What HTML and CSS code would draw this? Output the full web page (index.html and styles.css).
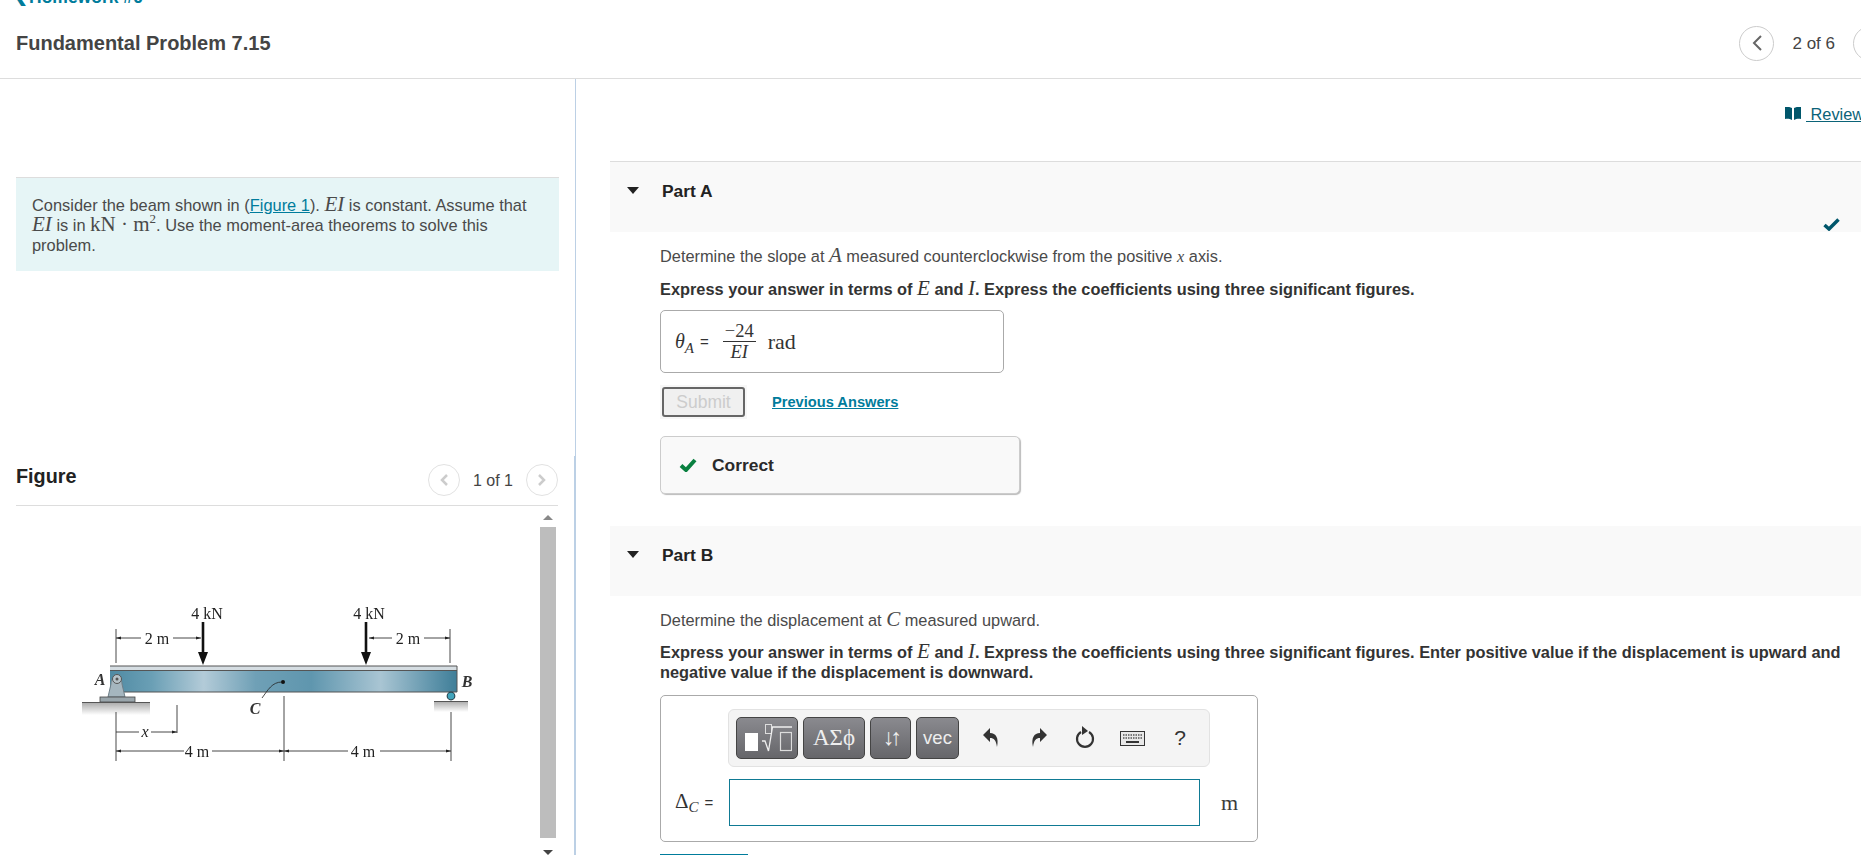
FILE: index.html
```html
<!DOCTYPE html>
<html lang="en">
<head>
<meta charset="utf-8">
<title>Fundamental Problem 7.15</title>
<link rel="stylesheet" href="styles.css">
</head>
<body>
<div class="crumb"><a class="crumb-link" href="#">❮Homework #6</a></div>
<header class="header">
  <h1 class="title">Fundamental Problem 7.15</h1>
  <nav class="pager">
    <span class="circle"><svg width="12" height="18" viewBox="0 0 12 18"><path class="chev" d="M10 2 3 9l7 7"/></svg></span>
    <span class="pager-text">2 of 6</span>
    <span class="circle"></span>
  </nav>
</header>
<main class="main">
  <section class="left">
    <div class="intro">
      <div class="note">Consider the beam shown in (<a class="link" href="#">Figure 1</a>). <span class="mi big">EI</span> is constant. Assume that<br><span class="mi big">EI</span> is in <span class="mr big">kN · m<sup class="sup">2</sup></span>. Use the moment-area theorems to solve this<br>problem.</div>
    </div>
    <div class="figure">
      <div class="fig-head">
        <h2 class="fig-title">Figure</h2>
        <div class="fig-pager">
          <span class="circle small"><svg width="10" height="14" viewBox="0 0 10 14"><path class="chev faint" d="M8 2 3 7l5 5"/></svg></span>
          <span class="fig-count">1 of 1</span>
          <span class="circle small"><svg width="10" height="14" viewBox="0 0 10 14"><path class="chev faint" d="m2 2 5 5-5 5"/></svg></span>
        </div>
      </div>
      <div class="fig-body">
        <svg class="beam" width="420" height="190" viewBox="0 0 420 190">
          <defs>
            <linearGradient id="steel" x1="0" x2="1" y1="0" y2="0">
              <stop offset="0" stop-color="#4f8aa3"/>
              <stop offset=".12" stop-color="#6a9fb5"/>
              <stop offset=".27" stop-color="#b3cbd8"/>
              <stop offset=".42" stop-color="#6fa0b6"/>
              <stop offset=".58" stop-color="#5f96ae"/>
              <stop offset=".78" stop-color="#a9c5d3"/>
              <stop offset=".93" stop-color="#5f94ab"/>
              <stop offset="1" stop-color="#3f7e98"/>
            </linearGradient>
            <linearGradient id="shade" x1="0" x2="0" y1="0" y2="1">
              <stop offset="0" stop-color="#a8a8a8"/>
              <stop offset="1" stop-color="#fff"/>
            </linearGradient>
          </defs>
          <rect x="12" y="112" width="68" height="13" fill="url(#shade)"/>
          <rect x="364" y="111" width="34" height="11" fill="url(#shade)"/>
          <rect x="40" y="76" width="347" height="26" fill="url(#steel)"/>
          <rect x="40" y="76" width="347" height="4" fill="#d5dde2"/>
          <path class="ln2" d="M40 80.500h347M40 102h347M40 76h347M387 76v26"/>
          <path d="M46 87c5 0 6 4 6 7l3 13H38l3-13c0-3 1-7 5-7z" fill="#a5b6bf" stroke="#6f7f88"/>
          <circle cx="47" cy="89" r="4.500" fill="#b7c3c9" stroke="#555"/>
          <circle cx="47" cy="89" r="1.500" fill="#555"/>
          <rect x="30" y="107" width="35" height="5" fill="#9aa6ac" stroke="#444" stroke-width=".8"/>
          <path class="ln2" d="M12 112.500h68M364 111.500h34"/>
          <circle cx="381" cy="106" r="3.800" fill="#41a5bd" stroke="#2b4a55" stroke-width="1.200"/>
          <path class="ln" d="M46 39v34M46 122v49M380 39v34M381 122v49M214 106v65M107 115v28"/>
          <path class="ln" d="M46 48h25M103 48h28M299 48h23M354 48h26M46 142h23M81 142h26M46 161h68M142 161h72M214 161h64M310 161h71"/>
          <path d="M46 48l5-1.500v3zM131 48l-5-1.500v3zM299 48l5-1.500v3zM380 48l-5-1.500v3zM107 142l-5-1.500v3zM46 161l5-1.500v3zM214 161l-5-1.500v3zM214 161l5-1.500v3zM381 161l-5-1.500v3z" fill="#222"/>
          <path class="shaft" d="M133 32v31M296 32v31"/>
          <path d="M128 62h10l-5 13zM291 62h10l-5 13z" fill="#111"/>
          <circle cx="213" cy="92" r="2" fill="#111"/>
          <path class="thin" d="M212 92c-10 0-14 8-20 16"/>
          <text class="d" x="137" y="29" text-anchor="middle">4 kN</text>
          <text class="d" x="299" y="29" text-anchor="middle">4 kN</text>
          <text class="d" x="87" y="54" text-anchor="middle">2 m</text>
          <text class="d" x="338" y="54" text-anchor="middle">2 m</text>
          <text class="d" x="127" y="167" text-anchor="middle">4 m</text>
          <text class="d" x="293" y="167" text-anchor="middle">4 m</text>
          <text class="dl" x="30" y="95" text-anchor="middle">A</text>
          <text class="dl" x="397" y="97" text-anchor="middle">B</text>
          <text class="dl" x="185" y="124" text-anchor="middle">C</text>
          <text class="dx" x="75" y="147" text-anchor="middle">x</text>
        </svg>
        <div class="scrollbar">
          <span class="sb-up"></span>
          <span class="sb-thumb"></span>
          <span class="sb-down"></span>
        </div>
      </div>
    </div>
  </section>
  <section class="right">
    <div class="review-row">
      <a class="review" href="#"><svg class="book" width="16" height="13" viewBox="0 0 16 13"><path d="M0 0c3-.5 5 0 7 1v12c-2-1-4-1.500-7-1zM16 0c-3-.5-5 0-7 1v12c2-1 4-1.500 7-1z"/></svg><span class="review-text">&nbsp;Review</span></a>
    </div>
    <div class="part-head">
      <span class="tri"></span><h3 class="part-name">Part A</h3>
      <svg class="done" width="17" height="13" viewBox="0 0 17 13"><path d="M1.500 7 6 11l9.500-9.500" fill="none" stroke-width="3.500"/></svg>
    </div>
    <div class="part-body">
      <p class="q first">Determine the slope at <span class="mi big">A</span> measured counterclockwise from the positive <span class="mi">x</span> axis.</p>
      <p class="q strong gap">Express your answer in terms of <span class="mi big reg">E</span> and <span class="mi big reg">I</span>. Express the coefficients using three significant figures.</p>
      <div class="answer">
        <span class="math"><span class="mi">θ</span><sub class="mi sub">A</sub></span><span class="eq">=</span>
        <span class="frac"><span class="num">−24</span><span class="den mi">EI</span></span>
        <span class="unit">rad</span>
      </div>
      <div class="actions">
        <span class="halo"><button class="submit" type="button" disabled>Submit</button></span>
        <a class="prev" href="#">Previous Answers</a>
      </div>
      <div class="correct">
        <svg class="ok" width="18" height="14" viewBox="0 0 18 14"><path d="M2 7.500 7 12l9-10" fill="none" stroke-width="4"/></svg>
        <span class="correct-text">Correct</span>
      </div>
    </div>
    <div class="part-head second">
      <span class="tri"></span><h3 class="part-name">Part B</h3>
    </div>
    <div class="part-body">
      <p class="q first">Determine the displacement at <span class="mi big">C</span> measured upward.</p>
      <p class="q strong gap wide">Express your answer in terms of <span class="mi big reg">E</span> and <span class="mi big reg">I</span>. Express the coefficients using three significant figures. Enter positive value if the displacement is upward and negative value if the displacement is downward.</p>
      <div class="entry">
        <div class="toolbar">
          <span class="tb w62"><svg width="50" height="30" viewBox="0 0 50 30"><rect x="3" y="10" width="13" height="18" fill="#fff"/><rect x="23.500" y="1.500" width="6" height="9" fill="none" stroke="#ddd"/><path d="M20 18h3l3.500 10 4-24H50" fill="none" stroke="#eee" stroke-width="1.300"/><rect x="38.500" y="9.500" width="11" height="18" fill="none" stroke="#ddd" stroke-width="1.200"/></svg></span>
          <span class="tb w62 serif">ΑΣϕ</span>
          <span class="tb w41 serif">↓↑</span>
          <span class="tb w43">vec</span>
          <span class="tool t1"><svg width="20" height="24" viewBox="0 0 20 24"><path d="M8 2 1 9l7 7v-4c4 0 6 2 7 9 2-9-1-14-7-14z" fill="#333"/></svg></span>
          <span class="tool t2"><svg width="20" height="24" viewBox="0 0 20 24"><path d="m12 2 7 7-7 7v-4c-4 0-6 2-7 9-2-9 1-14 7-14z" fill="#333"/></svg></span>
          <span class="tool t3"><svg width="22" height="24" viewBox="0 0 22 24"><path d="M15 6a8 8 0 1 1-8 0" fill="none" stroke="#333" stroke-width="2.200"/><path d="M8 0v9l6-4z" fill="#333"/></svg></span>
          <span class="tool t4"><svg width="25" height="15" viewBox="0 0 25 15"><rect x=".5" y=".5" width="24" height="14" fill="#e8e8e8" stroke="#333"/><path d="M3 4h19M3 7h19" stroke="#555" stroke-width="1.500" stroke-dasharray="1.500 1"/><path d="M6 11h13" stroke="#333" stroke-width="2"/></svg></span>
          <span class="tool t5">?</span>
        </div>
        <div class="entry-row">
          <span class="label"><span class="mr big">Δ</span><sub class="mi sub">C</sub><span class="eq">=</span></span>
          <span class="field"></span>
          <span class="unit unit-m">m</span>
        </div>
      </div>
      <button class="send" type="button">Submit</button>
    </div>
  </section>
</main>
</body>
</html>
```

FILE: styles.css
```css
* { box-sizing: border-box; }
html, body { margin: 0; height: 855px; overflow: hidden; background: #fff; }
body { font-family: "Liberation Sans", Arial, sans-serif; font-size: 16.350px; color: #3c3c3c; width: 1861px; }
a { text-decoration: none; }

.crumb { height: 6px; overflow: hidden; padding-left: 14px; }
.crumb-link { display: block; margin-top: -12px; font-weight: bold; font-size: 17.500px; line-height: 18px; color: #007c9c; }

.header { height: 73px; border-bottom: 1px solid #ddd; display: flex; align-items: center; justify-content: space-between; padding: 0 0 0 16px; overflow: hidden; }
.title { margin: 0; font-size: 20px; line-height: 24px; font-weight: bold; color: #444; position: relative; top: 1px; white-space: nowrap; }
.pager { display: flex; align-items: center; margin-right: -27px; position: relative; top: 1px; }
.circle { width: 35px; height: 35px; border: 1px solid #ccc; border-radius: 50%; display: flex; align-items: center; justify-content: center; flex: none; }
.chev { fill: none; stroke: #666; stroke-width: 2; }
.chev.faint { stroke: #ccc; stroke-width: 2.500; }
.pager-text { margin: 2px 18px 0 18px; font-size: 17px; color: #444; }

.main { display: flex; height: 776px; }
.left { width: 576px; flex: none; display: flex; flex-direction: column; border-right: 1px solid #bcd0e5; }
.intro { height: 377px; padding: 98px 16px 0 16px; }
.note { height: 94px; background: #e6f5f6; border-top: 1px solid #ddd; padding: 17px 16px 0; font-size: 16.400px; line-height: 20px; color: #4a4a4a; white-space: nowrap; }
.link { color: #007c9c; text-decoration: underline; }
.mi { font-family: "Liberation Serif", serif; font-style: italic; }
.mr { font-family: "Liberation Serif", serif; }
.big { font-size: 21px; line-height: 14px; }
.reg { font-weight: normal; }
.sup { font-size: 13px; line-height: 0; }

.figure { flex: 1; border-right: 1px solid #bcd0e5; min-height: 0; }
.fig-head { height: 50px; margin: 0 16px 0 16px; border-bottom: 1px solid #ddd; display: flex; justify-content: space-between; align-items: center; }
.fig-title { margin: 0; font-size: 19.800px; font-weight: bold; color: #222; position: relative; top: -4px; }
.fig-pager { display: flex; align-items: center; position: relative; top: -1px; }
.circle.small { width: 32px; height: 32px; border-color: #e2e2e2; }
.fig-count { margin: 2px 13px 0 13px; font-size: 16px; color: #444; }
.fig-body { display: flex; height: 349px; position: relative; }
.beam { flex: none; margin: 84px 0 0 70px; filter: blur(.4px); }
.ln { fill: none; stroke: #333; stroke-width: .9; }
.ln2 { fill: none; stroke: #555; stroke-width: 1; }
.thin { fill: none; stroke: #222; stroke-width: .8; }
.shaft { fill: none; stroke: #111; stroke-width: 2.600; }
.d { font-family: "Liberation Serif", serif; font-size: 16px; fill: #222; }
.dl { font-family: "Liberation Serif", serif; font-size: 16px; font-style: italic; font-weight: bold; fill: #333; }
.dx { font-family: "Liberation Serif", serif; font-size: 16px; font-style: italic; fill: #222; }

.scrollbar { width: 17px; margin-left: 49px; padding-top: 9px; display: flex; flex-direction: column; align-items: center; flex: none; }
.sb-up { width: 0; height: 0; border: 5px solid transparent; border-top: 0; border-bottom: 5px solid #888; }
.sb-thumb { width: 16px; height: 312px; margin-top: 7px; background: #bdbdbd; }
.sb-down { width: 0; height: 0; margin-top: 12px; border: 5px solid transparent; border-bottom: 0; border-top: 5px solid #444; }

.right { flex: 1; min-width: 0; overflow: hidden; }
.review-row { height: 82px; padding: 25px 0 0 1209px; white-space: nowrap; }
.review { display: flex; align-items: flex-start; color: #0b6378; font-size: 16.350px; line-height: 20px; }
.book { fill: #00566b; margin-top: 3px; flex: none; }
.review-text { margin-left: 5px; text-decoration: underline; }

.part-head { height: 71px; margin-left: 34px; background: #f9f9f9; border-top: 1px solid #ddd; padding: 17px 0 0 17px; display: flex; align-items: flex-start; position: relative; }
.part-head.second { margin-top: 32px; height: 70px; border-top: 0; }
.tri { width: 0; height: 0; margin-top: 8px; border: 6.500px solid transparent; border-bottom: 0; border-top: 7px solid #222; flex: none; }
.part-name { margin: 0 0 0 23px; font-size: 17.400px; line-height: 24px; font-weight: bold; color: #222; }
.done { position: absolute; right: 21px; top: 56px; stroke: #00566b; }

.part-body { margin-left: 84px; }
.q { margin: 0; line-height: 20px; font-size: 16.350px; color: #4a4a4a; }
.q.first { padding-top: 14px; }
.q.gap { margin-top: 12px; }
.q.strong { font-weight: bold; color: #333; }
.q.wide { width: 1190px; }
.answer { width: 344px; height: 63px; margin-top: 11px; border: 1px solid #aaa; border-radius: 5px; padding-left: 14px; display: flex; align-items: center; font-family: "Liberation Serif", serif; font-size: 18px; color: #333; }
.math { font-size: 20px; }
.sub { font-size: 15px; line-height: 0; }
.eq { font-family: "Liberation Sans", sans-serif; font-size: 15px; margin: 0 14px 0 6px; }
.frac { display: flex; flex-direction: column; align-items: center; font-size: 18.500px; line-height: 20px; }
.num { border-bottom: 1px solid #333; padding: 0 2px; }
.unit { margin-left: 12px; font-size: 22px; }
.actions { display: flex; align-items: center; margin-top: 12px; height: 34px; }
.halo { padding: 2px; background: #f7f7f7; display: block; height: 34px; }
.submit { width: 83px; height: 30px; padding: 0; border: 2px solid #666; border-radius: 3px; background: #f0f0f0; color: #ccc; font: 17.500px "Liberation Sans", sans-serif; }
.prev { margin-left: 25px; color: #007c9c; font-weight: bold; font-size: 14.650px; text-decoration: underline; }
.correct { width: 360px; height: 58px; margin-top: 17px; border: 1px solid #ccc; border-radius: 5px; background: #f9f9f9; box-shadow: 1px 1px 1px #bbb; padding-left: 18px; display: flex; align-items: center; }
.ok { stroke: #0a8040; flex: none; }
.correct-text { margin-left: 15px; font-weight: bold; font-size: 17.400px; color: #2a2a2a; }

.entry { width: 598px; height: 147px; margin-top: 13px; border: 1px solid #aaa; border-radius: 5px; padding: 13px 0 0 67px; position: relative; }
.toolbar { width: 482px; height: 58px; background: #f4f4f4; border: 1px solid #e2e2e2; border-radius: 6px; padding: 7px; display: flex; align-items: flex-start; position: relative; }
.tb { height: 42px; margin-right: 5px; border: 1px solid #444; border-radius: 5px; background: linear-gradient(#8a8a8f, #66666a); color: #eee; display: flex; align-items: center; justify-content: center; font-size: 18.500px; flex: none; }
.tb.serif { font-family: "Liberation Serif", serif; font-size: 23px; }
.w62 { width: 62px; }
.w41 { width: 41px; letter-spacing: -4px; }
.w43 { width: 43px; }
.tool { width: 48px; height: 42px; display: flex; align-items: center; justify-content: center; flex: none; color: #333; font-size: 21px; }
.t1 { margin-left: 4px; }
.t2 { margin-left: -2px; }
.t3 { margin-left: -1px; }
.t4 { margin-left: -1px; }
.entry-row { display: flex; align-items: center; margin: 12px 0 0 -67px; height: 47px; }
.label { width: 67px; padding-left: 14px; font-size: 15px; white-space: nowrap; color: #333; flex: none; }
.label .eq { margin: 0 0 0 6px; }
.field { width: 471px; height: 47px; margin-left: 1px; border: 1px solid #0f7a94; background: #fff; flex: none; }
.unit-m { margin-left: 21px; font-family: "Liberation Serif", serif; }
.send { display: block; width: 88px; height: 30px; margin-top: 12px; border: 0; background: #007c9c; color: #fff; font: 15.400px "Liberation Sans", sans-serif; }
```
